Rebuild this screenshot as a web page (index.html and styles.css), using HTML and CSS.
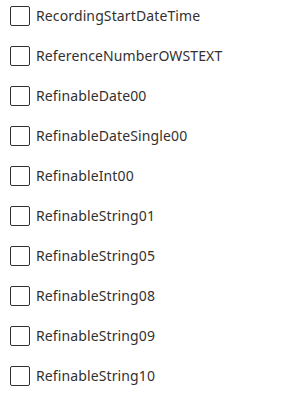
FILE: index.html
```html
<!DOCTYPE html>
<html>
<head>
<meta charset="utf-8">
<link rel="stylesheet" href="styles.css">
</head>
<body>
<div class="list">
  <label class="item"><span class="box"></span><span class="text">RecordingStartDateTime</span></label>
  <label class="item"><span class="box"></span><span class="text">ReferenceNumberOWSTEXT</span></label>
  <label class="item"><span class="box"></span><span class="text">RefinableDate00</span></label>
  <label class="item"><span class="box"></span><span class="text">RefinableDateSingle00</span></label>
  <label class="item"><span class="box"></span><span class="text">RefinableInt00</span></label>
  <label class="item"><span class="box"></span><span class="text">RefinableString01</span></label>
  <label class="item"><span class="box"></span><span class="text">RefinableString05</span></label>
  <label class="item"><span class="box"></span><span class="text">RefinableString08</span></label>
  <label class="item"><span class="box"></span><span class="text">RefinableString09</span></label>
  <label class="item"><span class="box"></span><span class="text">RefinableString10</span></label>
</div>
</body>
</html>
```
FILE: styles.css
```css
html, body {
  margin: 0;
  padding: 0;
  background: #ffffff;
}
body {
  font-family: "Noto Sans", "Open Sans", sans-serif;
  font-size: 14px;
  letter-spacing: 0.12px;
  color: #323130;
}
.list {
  display: flex;
  flex-direction: column;
  gap: 20px;
  padding: 6px 0 0 10px;
}
.item {
  display: flex;
  align-items: center;
  gap: 6px;
  height: 20px;
}
.box {
  box-sizing: border-box;
  width: 20px;
  height: 20px;
  border: 1px solid #323130;
  border-radius: 2px;
  flex: none;
}
.text {
  line-height: 20px;
}
```
